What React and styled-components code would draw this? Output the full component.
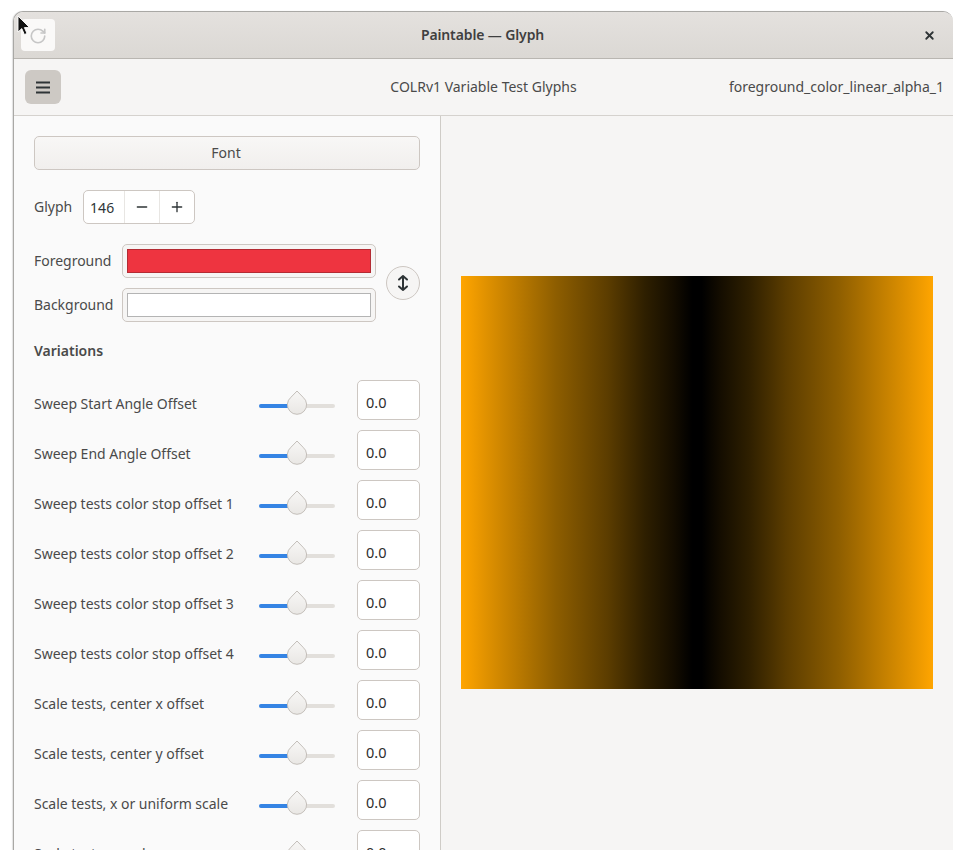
import React from "react";
import styled, { createGlobalStyle } from "styled-components";
import { Minus, Plus, X, RotateCw } from "lucide-react";

const Global = createGlobalStyle`
  html, body { margin: 0; padding: 0; background: #fff; height: 850px; overflow: hidden; }
  * { box-sizing: border-box; }
  body { font-family: "Noto Sans", "Open Sans", sans-serif; font-size: 14px; color: #3d3d3d; }
`;

const Screen = styled.div`
  position: relative;
  width: 953px;
  height: 850px;
  padding: 11px 0 0 13px;
  overflow: hidden;
`;

const Window = styled.div`
  width: 940px;
  height: 839px;
  border-top: 1px solid #a9a8a5;
  border-left: 1px solid #a9a8a5;
  border-radius: 10px 10px 0 0;
  overflow: hidden;
  display: flex;
  flex-direction: column;
  background: #f6f5f4;
  box-shadow: -1px 0 1px rgba(0, 0, 0, 0.12);
`;

const TitleBar = styled.header`
  height: 47px;
  flex: none;
  display: grid;
  grid-template-columns: 1fr auto 1fr;
  align-items: center;
  padding: 0 17px;
  background: linear-gradient(#e4e1de, #dbd8d4);
  border-bottom: 1px solid #b9b6b1;
`;

const Title = styled.div`
  grid-column: 2;
  font-weight: 600;
  font-size: 14px;
  letter-spacing: -0.12px;
  color: #3f3f3f;
  padding: 0 2px 2px 0;
`;

const CloseButton = styled.div`
  grid-column: 3;
  justify-self: end;
  display: flex;
  color: #2e3436;
`;

const Toolbar = styled.div`
  height: 57px;
  flex: none;
  display: grid;
  grid-template-columns: 1fr auto 1fr;
  align-items: center;
  padding: 0 9px 0 11px;
  background: #f6f5f4;
  border-bottom: 1px solid #d5d2ce;
`;

const MenuButton = styled.div`
  width: 36px;
  height: 34px;
  border-radius: 6px;
  background: #cdc9c4;
  color: #2e3436;
  display: flex;
  align-items: center;
  justify-content: center;
`;

const ToolbarCenter = styled.div`
  font-size: 14px;
  color: #4a4a4a;
  padding: 0 2px 2px 0;
`;

const ToolbarEnd = styled.div`
  justify-self: end;
  font-size: 14px;
  color: #4a4a4a;
  padding-bottom: 2px;
`;

const Body = styled.div`
  flex: 1;
  min-height: 0;
  display: flex;
`;

const Side = styled.aside`
  width: 427px;
  flex: none;
  background: #fafafa;
  border-right: 1px solid #cfccc7;
  padding: 20px 20px 0 20px;
  overflow: hidden;
`;

const FontButton = styled.div`
  height: 34px;
  padding: 0 2px 2px 0;
  border: 1px solid #cdc7c2;
  border-radius: 5px;
  background: linear-gradient(#f8f7f6, #f1efed);
  display: flex;
  align-items: center;
  justify-content: center;
  color: #4a4a4a;
`;

const GlyphRow = styled.div`
  display: flex;
  align-items: center;
  gap: 11px;
  margin-top: 20px;
  height: 34px;
`;

const Label = styled.span`
  color: #4a4a4a;
  font-size: 14px;
  letter-spacing: -0.02px;
  white-space: nowrap;
  padding-bottom: 2px;
`;

const RowLabel = styled(Label)`
  padding-bottom: 0;
  padding-top: 6px;
`;

const Spin = styled.div`
  display: flex;
  height: 34px;
  background: #fff;
  border: 1px solid #cdc7c2;
  border-radius: 5px;
  overflow: hidden;
`;

const SpinValue = styled.div`
  width: 40px;
  display: flex;
  align-items: center;
  padding-left: 6px;
  font-size: 14px;
  color: #2e3436;
`;

const SpinButton = styled.div`
  width: 35px;
  border-left: 1px solid #e8e6e3;
  display: flex;
  align-items: center;
  justify-content: center;
  color: #2e3436;
`;

const ColorArea = styled.div`
  display: grid;
  grid-template-columns: 88px 254px 1fr;
  grid-template-rows: 34px 34px;
  row-gap: 10px;
  align-items: center;
  margin-top: 20px;
`;

const ColorButton = styled.div`
  height: 34px;
  padding: 4px;
  background: #f6f5f4;
  border: 1px solid #cdc7c2;
  border-radius: 5px;
  display: flex;
`;

const Swatch = styled.div`
  flex: 1;
  background: ${(p) => p.$color};
  border: 1px solid ${(p) => p.$edge};
`;

const SwapButton = styled.div`
  grid-column: 3;
  grid-row: 1 / span 2;
  justify-self: end;
  width: 34px;
  height: 34px;
  border-radius: 50%;
  border: 1px solid #cdc7c2;
  background: #f6f5f4;
  display: flex;
  align-items: center;
  justify-content: center;
`;

const Heading = styled.div`
  font-weight: 600;
  font-size: 14px;
  color: #4a4a4a;
  margin-top: 19px;
  line-height: 20px;
`;

const Rows = styled.div`
  margin-top: 19px;
  display: flex;
  flex-direction: column;
  gap: 10px;
`;

const Row = styled.div`
  display: grid;
  grid-template-columns: 225px 76px 1fr;
  align-items: center;
  height: 40px;
`;

const SliderTrack = styled.div`
  position: relative;
  height: 4px;
  margin-top: 12px;
  border-radius: 2px;
  background: #e2dfdb;
`;

const SliderFill = styled.div`
  height: 100%;
  border-radius: 2px;
  background: #3584e4;
`;

const Thumb = styled.svg`
  position: absolute;
  left: 26px;
  top: -15px;
`;

const ValueBox = styled.div`
  justify-self: end;
  width: 63px;
  height: 40px;
  border: 1px solid #cdc7c2;
  border-radius: 5px;
  background: #fff;
  display: flex;
  align-items: center;
  padding: 4px 0 0 8px;
  font-size: 14.5px;
  color: #2e2e2e;
`;

const Preview = styled.main`
  flex: 1;
  padding: 160px 20px 0 20px;
  background: #f6f5f4;
`;

const GlyphCanvas = styled.div`
  width: 472px;
  height: 413px;
  background: linear-gradient(
    90deg,
    #ffa500 0%,
    #de9000 5.7%,
    #8e5e00 20%,
    #5c3d00 31%,
    #2e1f00 39%,
    #140d00 45%,
    #000 49%,
    #000 51%,
    #140d00 55%,
    #2e1f00 61%,
    #5c3d00 69%,
    #8e5e00 80%,
    #de9000 94.3%,
    #ffa500 100%
  );
`;

const RefreshButton = styled.div`
  position: absolute;
  left: 21px;
  top: 19px;
  width: 34px;
  height: 32px;
  border-radius: 4px;
  background: #faf9f8;
  display: flex;
  align-items: center;
  justify-content: center;
  color: #c6c6c6;
  padding-top: 2px;
`;

const Cursor = styled.svg`
  position: absolute;
  left: 17px;
  top: 15px;
`;

const names = [
  "Sweep Start Angle Offset",
  "Sweep End Angle Offset",
  "Sweep tests color stop offset 1",
  "Sweep tests color stop offset 2",
  "Sweep tests color stop offset 3",
  "Sweep tests color stop offset 4",
  "Scale tests, center x offset",
  "Scale tests, center y offset",
  "Scale tests, x or uniform scale",
  "Scale tests, y scale",
];

const SliderThumb = () => (
  <Thumb width="24" height="28" viewBox="0 0 24 28">
    <defs>
      <linearGradient id="thumbFill" x1="0" y1="0" x2="0" y2="1">
        <stop offset="0" stopColor="#f8f7f6" />
        <stop offset="1" stopColor="#e9e7e4" />
      </linearGradient>
    </defs>
    <path
      d="M12 2 L18 8.2 A9.6 9.6 0 1 1 6 8.2 Z"
      fill="url(#thumbFill)"
      stroke="#c4bfba"
      strokeWidth="1"
      strokeLinejoin="round"
    />
  </Thumb>
);

const MenuIcon = () => (
  <svg width="14" height="13" viewBox="0 0 14 13" fill="#2e3436">
    <rect x="0" y="0.5" width="14" height="2" />
    <rect x="0" y="5.5" width="14" height="2" />
    <rect x="0" y="10.5" width="14" height="2" />
  </svg>
);

export default function App() {
  return (
    <Screen>
      <Global />
      <Window>
        <TitleBar>
          <Title>Paintable — Glyph</Title>
          <CloseButton>
            <X size={13} strokeWidth={3.4} />
          </CloseButton>
        </TitleBar>
        <Toolbar>
          <MenuButton>
            <MenuIcon />
          </MenuButton>
          <ToolbarCenter>COLRv1 Variable Test Glyphs</ToolbarCenter>
          <ToolbarEnd>foreground_color_linear_alpha_1</ToolbarEnd>
        </Toolbar>
        <Body>
          <Side>
            <FontButton>Font</FontButton>
            <GlyphRow>
              <Label>Glyph</Label>
              <Spin>
                <SpinValue>146</SpinValue>
                <SpinButton>
                  <Minus size={16} strokeWidth={2} />
                </SpinButton>
                <SpinButton>
                  <Plus size={16} strokeWidth={2} />
                </SpinButton>
              </Spin>
            </GlyphRow>
            <ColorArea>
              <Label>Foreground</Label>
              <ColorButton>
                <Swatch $color="#ee3440" $edge="#b32b33" />
              </ColorButton>
              <SwapButton>
                <svg width="16" height="18" viewBox="0 0 16 18" fill="none" stroke="#2e3436" strokeWidth="2" strokeLinecap="round" strokeLinejoin="round">
                  <path d="M8 2v14M4 5.5 8 2l4 3.5M4 12.5 8 16l4-3.5" />
                </svg>
              </SwapButton>
              <Label>Background</Label>
              <ColorButton>
                <Swatch $color="#ffffff" $edge="#b4b4b4" />
              </ColorButton>
            </ColorArea>
            <Heading>Variations</Heading>
            <Rows>
              {names.map((name) => (
                <Row key={name}>
                  <RowLabel>{name}</RowLabel>
                  <SliderTrack>
                    <SliderFill style={{ width: "38px" }} />
                    <SliderThumb />
                  </SliderTrack>
                  <ValueBox>0.0</ValueBox>
                </Row>
              ))}
            </Rows>
          </Side>
          <Preview>
            <GlyphCanvas />
          </Preview>
        </Body>
      </Window>
      <RefreshButton>
        <RotateCw size={18} strokeWidth={2.2} />
      </RefreshButton>
      <Cursor width="14" height="22" viewBox="0 0 14 22">
        <path d="M1 1 L1 17 L4.8 13.6 L7.4 19.6 L10 18.4 L7.4 12.6 L12.4 12.4 Z" fill="#111" stroke="#fff" strokeWidth="0.9" />
      </Cursor>
    </Screen>
  );
}
